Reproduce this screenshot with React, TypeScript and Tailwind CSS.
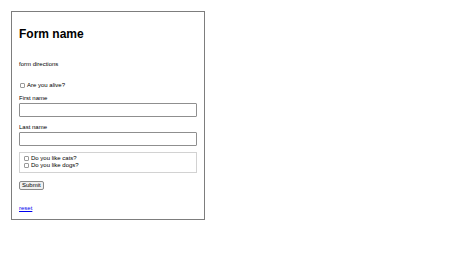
export default function App() {
  const box =
    "appearance-none w-[5px] h-[5px] m-0 border border-[#9a9a9a] rounded-[1px] bg-white shrink-0";
  return (
    <div className="p-[11px] font-['Liberation_Sans',Arial,sans-serif] text-[6px] text-black">
      <form className="w-[194px] h-[209px] border border-[#7d7d7d] px-[7px] flex flex-col">
        <h1 className="mt-[15px] text-[12px] font-bold leading-[14px]">Form name</h1>
        <p className="mt-[19px] leading-[8px]">form directions</p>
        <label className="mt-[13px] h-[8px] flex items-center gap-[2px] leading-[8px]">
          <input type="checkbox" className={box + " ml-[1px]"} />
          Are you alive?
        </label>
        <label className="mt-[5px] leading-[8px]">First name</label>
        <input className="mt-[1px] h-[14px] w-full border border-[#8f8f8f] rounded-[1px]" />
        <label className="mt-[6px] leading-[8px]">Last name</label>
        <input className="mt-[1px] h-[14px] w-full border border-[#8f8f8f] rounded-[1px]" />
        <fieldset className="mt-[6px] h-[21px] shrink-0 border border-[#d2d2d2] m-0 p-0">
          <div className="pt-[2px] pl-[4px]">
            <label className="flex items-center gap-[2px] leading-[7px]">
              <input type="checkbox" className={box} />
              Do you like cats?
            </label>
            <label className="flex items-center gap-[2px] leading-[7px]">
              <input type="checkbox" className={box} />
              Do you like dogs?
            </label>
          </div>
        </fieldset>
        <div className="mt-[8px] flex">
          <button
            type="button"
            className="h-[9px] px-[2px] text-[6px] leading-[7px] border border-[#8a8a8a] bg-[#f0f0f0] rounded-[2px]"
          >
            Submit
          </button>
        </div>
        <a href="#" className="mt-[14px] text-[#0000ee] underline leading-[8px] self-start">
          reset
        </a>
      </form>
    </div>
  );
}
